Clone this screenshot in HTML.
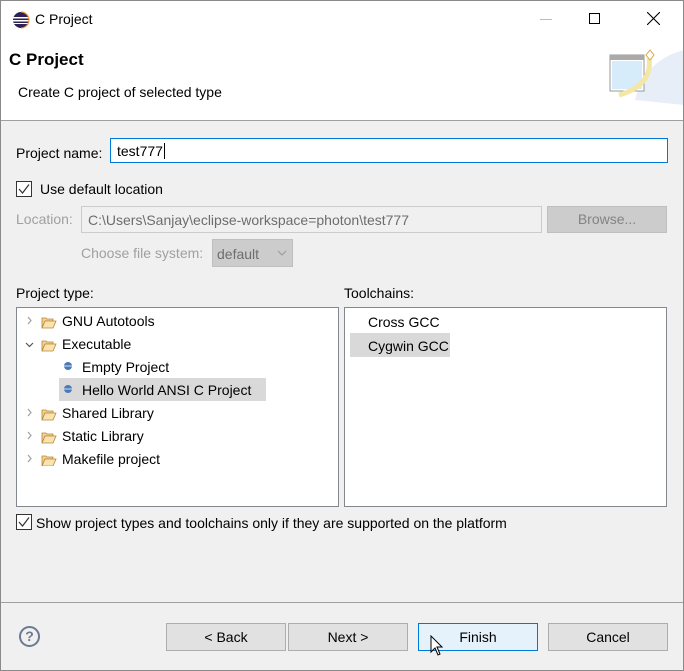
<!DOCTYPE html>
<html><head><style>
*{margin:0;padding:0;box-sizing:border-box}
body{width:684px;height:671px;background:#f0f0f0;font-family:"Liberation Sans",sans-serif;font-size:14px;color:#000;position:relative;overflow:hidden}
.a{position:absolute;white-space:nowrap}
.btn{position:absolute;top:623px;height:28px;border:1px solid #adadad;background:#e1e1e1;text-align:center;line-height:26px}
</style></head><body>
<div class="a" style="left:0;top:0;width:684px;height:671px;border:1px solid #8a8a8a;z-index:9;pointer-events:none"></div>
<div class="a" style="left:0;top:0;width:684px;height:121px;background:#fff;border-bottom:1px solid #a0a0a0"></div>
<svg class="a" style="left:12px;top:11px" width="18" height="18"><circle cx="9" cy="9" r="8" fill="#2c2255"/><rect x="1" y="6" width="16" height="1.5" fill="#fff"/><rect x="1" y="9" width="16" height="1.5" fill="#fff"/><rect x="1" y="12" width="16" height="1" fill="#fff"/><path d="M9 1a8 8 0 0 1 0 16" fill="none" stroke="#f7941e" stroke-width="1.5" opacity=".7"/></svg>
<div class="a" style="left:35px;top:11px">C Project</div>
<div class="a" style="left:540px;top:19px;width:12px;height:1px;background:#bbb"></div>
<div class="a" style="left:589px;top:13px;width:11px;height:11px;border:1px solid #000"></div>
<svg class="a" style="left:647px;top:12px" width="13" height="13"><path d="M0 0L13 13M13 0L0 13" stroke="#000" stroke-width="1.1"/></svg>
<div class="a" style="left:9px;top:50px;font-weight:bold;font-size:17px">C Project</div>
<div class="a" style="left:18px;top:84px">Create C project of selected type</div>
<svg class="a" style="left:605px;top:40px" width="79" height="65"><path d="M79 10 Q40 20 30 60 L79 65Z" fill="#e8eef8"/><rect x="5" y="15" width="34" height="36" fill="#fff" stroke="#999"/><rect x="5" y="15" width="34" height="5" fill="#aaa"/><rect x="7" y="21" width="30" height="28" fill="#d6ecfa"/><path d="M44 18 Q48 45 14 55" fill="none" stroke="#f3e7a8" stroke-width="5"/><path d="M45 10l4 5-4 5-4-5z" fill="#fff" stroke="#d8a83c"/></svg>

<div class="a" style="left:16px;top:145px">Project name:</div>
<div class="a" style="left:110px;top:138px;width:558px;height:25px;background:#fff;border:1px solid #0078d7;padding:4px 6px">test777<span style="border-left:1px solid #000;margin-left:1px"></span></div>
<div class="a" style="left:16px;top:181px;width:16px;height:16px;border:1px solid #333;background:#fff"></div>
<svg class="a" style="left:18px;top:183px" width="12" height="12"><path d="M1 6l3.5 4L11 1.5" fill="none" stroke="#333" stroke-width="1.2"/></svg>
<div class="a" style="left:40px;top:181px">Use default location</div>
<div class="a" style="left:16px;top:211px;color:#a0a0a0">Location:</div>
<div class="a" style="left:81px;top:206px;width:461px;height:27px;border:1px solid #ccc;background:#f0f0f0;color:#6d6d6d;padding:5px 6px">C:\Users\Sanjay\eclipse-workspace=photon\test777</div>
<div class="a" style="left:547px;top:206px;width:120px;height:27px;background:#ccc;border:1px solid #bfbfbf;color:#838383;text-align:center;line-height:25px">Browse...</div>
<div class="a" style="left:81px;top:245px;color:#a0a0a0">Choose file system:</div>
<div class="a" style="left:212px;top:239px;width:81px;height:28px;background:#ccc;border:1px solid #bfbfbf;color:#6d6d6d;padding:6px 4px">default</div>
<svg class="a" style="left:277px;top:250px" width="10" height="6"><path d="M1 1l4 4 4-4" fill="none" stroke="#999"/></svg>

<div class="a" style="left:16px;top:285px">Project type:</div>
<div class="a" style="left:16px;top:307px;width:323px;height:200px;background:#fff;border:1px solid #828790"></div>
<div class="a" style="left:344px;top:285px">Toolchains:</div>
<div class="a" style="left:344px;top:307px;width:323px;height:200px;background:#fff;border:1px solid #828790"></div>
<div class="a" style="left:59px;top:378px;width:207px;height:23px;background:#d9d9d9"></div>
<div class="a" style="left:350px;top:333px;width:100px;height:24px;background:#d9d9d9"></div>
<div class="a" style="left:368px;top:314px">Cross GCC</div>
<div class="a" style="left:368px;top:338px">Cygwin GCC</div>

<svg class="a" style="left:24px;top:314px" width="12" height="150" fill="none" stroke="#a0a0a0" stroke-width="1.2">
<path d="M4 3l3 3.5-3 3.5"/>
<path d="M2 29l3.5 3.5 3.5-3.5" stroke="#555"/>
<path d="M4 95l3 3.5-3 3.5"/>
<path d="M4 118l3 3.5-3 3.5"/>
<path d="M4 141l3 3.5-3 3.5"/>
</svg>
<svg class="a" style="left:41px;top:316px" width="16" height="150">
<defs><g id="f"><path d="M1 2h4l1 1h6v2H4L1 12z" fill="#f6d28e" stroke="#b5863b" stroke-width=".8"/><path d="M1 12l3-7h11l-3 7z" fill="#fbe3b0" stroke="#b5863b" stroke-width=".8"/></g></defs>
<use href="#f"/><use href="#f" y="23"/><use href="#f" y="92"/><use href="#f" y="115"/><use href="#f" y="138"/></svg>
<svg class="a" style="left:63px;top:361px" width="10" height="34"><circle cx="5" cy="5" r="4" fill="#4a7ab8"/><rect x="1" y="4.5" width="8" height="1" fill="#cfe0f2"/><circle cx="5" cy="28" r="4" fill="#4a7ab8"/><rect x="1" y="27.5" width="8" height="1" fill="#cfe0f2"/></svg>
<div class="a" style="left:62px;top:313px">GNU Autotools</div>
<div class="a" style="left:62px;top:336px">Executable</div>
<div class="a" style="left:82px;top:359px">Empty Project</div>
<div class="a" style="left:82px;top:382px">Hello World ANSI C Project</div>
<div class="a" style="left:62px;top:405px">Shared Library</div>
<div class="a" style="left:62px;top:428px">Static Library</div>
<div class="a" style="left:62px;top:451px">Makefile project</div>

<div class="a" style="left:16px;top:514px;width:16px;height:16px;border:1px solid #333;background:#fff"></div>
<svg class="a" style="left:18px;top:516px" width="12" height="12"><path d="M1 6l3.5 4L11 1.5" fill="none" stroke="#333" stroke-width="1.2"/></svg>
<div class="a" style="left:36px;top:515px">Show project types and toolchains only if they are supported on the platform</div>

<div class="a" style="left:0;top:602px;width:684px;height:1px;background:#a0a0a0"></div>
<div class="a" style="left:19px;top:626px;width:21px;height:21px;border:2px solid #6b7a90;border-radius:50%;text-align:center;line-height:17px;font-weight:bold;color:#6b7a90;font-size:14px">?</div>
<div class="btn" style="left:166px;width:120px">&lt; Back</div>
<div class="btn" style="left:288px;width:120px">Next &gt;</div>
<div class="btn" style="left:418px;width:120px;border-color:#0078d7;background:#e5f1fb">Finish</div>
<div class="btn" style="left:548px;width:120px">Cancel</div>
<svg class="a" style="left:430px;top:635px" width="14" height="22"><path d="M1 1v16l4-4 3 7 2-1-3-7h5z" fill="#fff" stroke="#000" stroke-width="1"/></svg>
</body></html>
